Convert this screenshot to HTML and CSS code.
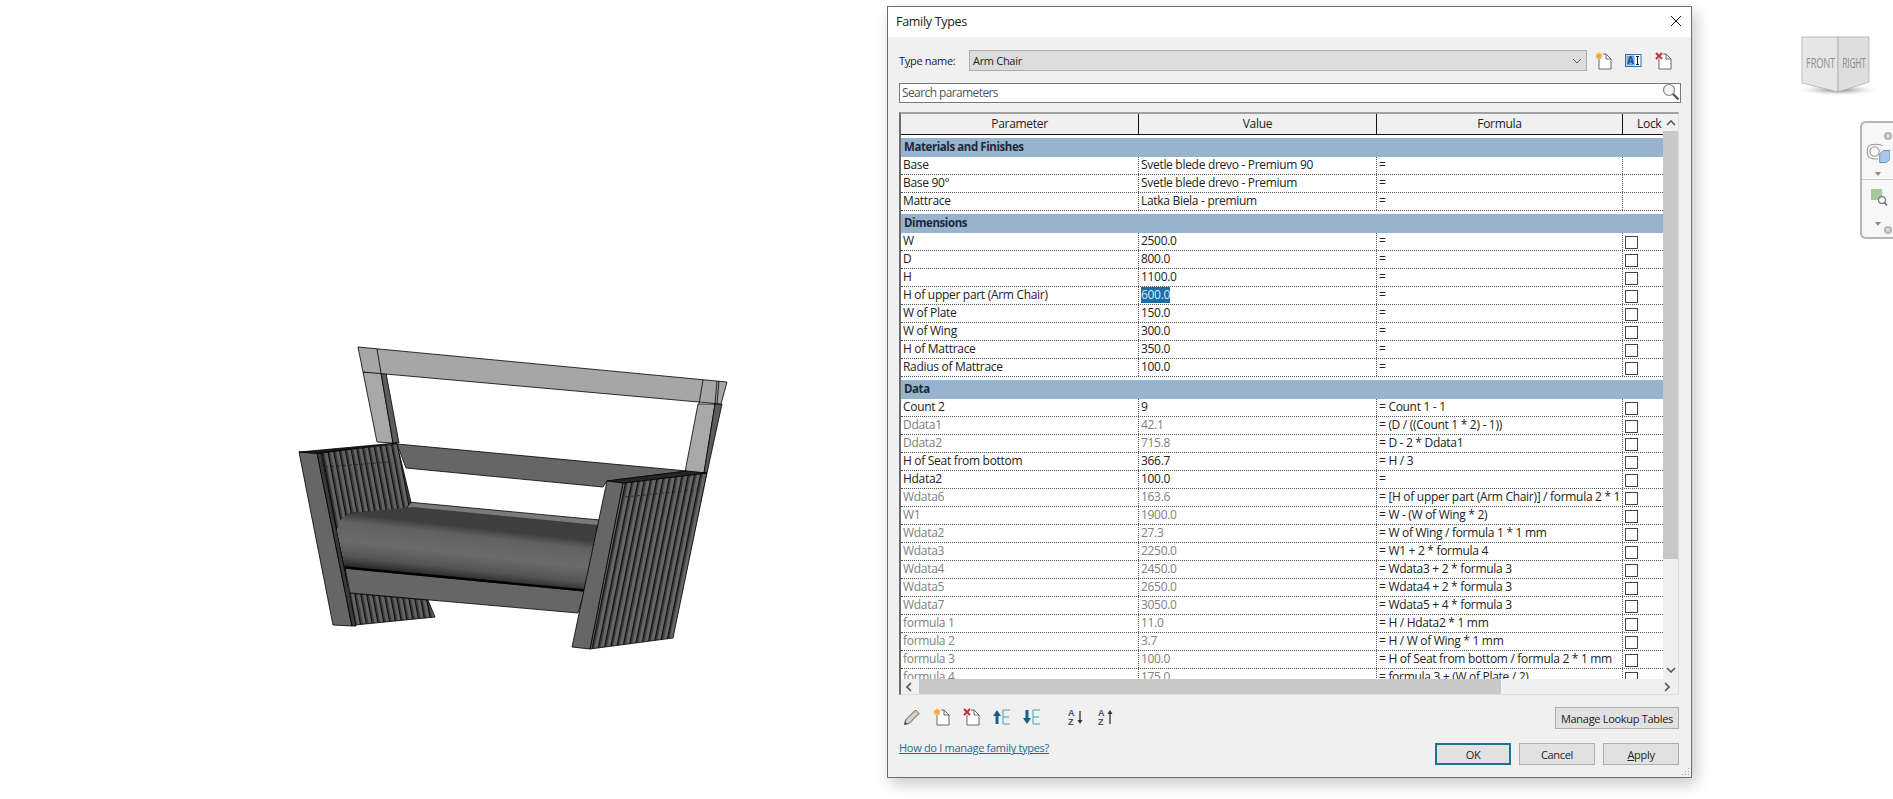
FILE: index.html
```html
<!DOCTYPE html>
<html lang="en">
<head>
<meta charset="utf-8">
<title>Family Types</title>
<link rel="stylesheet" href="styles.css">
</head>
<body>
<svg class="chair" viewBox="0 0 800 799" width="800" height="799" aria-hidden="true">
  <defs>
    <pattern id="slatL" patternUnits="userSpaceOnUse" width="5.8" height="20" patternTransform="rotate(-10.7)">
      <rect width="5.8" height="20" fill="#636363"/><rect width="2.6" height="20" fill="#343434"/><rect width=".9" height="20" fill="#0a0a0a"/>
    </pattern>
    <pattern id="slatR" patternUnits="userSpaceOnUse" width="6" height="20" patternTransform="rotate(11.4)">
      <rect width="6" height="20" fill="#666"/><rect width="2.6" height="20" fill="#343434"/><rect width=".9" height="20" fill="#0a0a0a"/>
    </pattern>
    <linearGradient id="matt" gradientUnits="userSpaceOnUse" x1="473" y1="510" x2="465" y2="582">
      <stop offset="0" stop-color="#3e3e3e"/><stop offset=".24" stop-color="#3f3f3f"/><stop offset=".36" stop-color="#626262"/>
      <stop offset=".62" stop-color="#6a6a6a"/><stop offset=".82" stop-color="#555"/><stop offset="1" stop-color="#1d1d1d"/>
    </linearGradient>
  </defs>
  <g stroke="#000" stroke-width=".8" stroke-linejoin="round">
    <polygon points="363,372 381,373 393,443 377,442" fill="#a8a8a8"/>
    <polygon points="381,373 386,373 399,443 393,443" fill="#5c5c5c"/>
    <polygon points="698,404 715,404 704,473 685,472" fill="#a8a8a8"/>
    <polygon points="715,404 722,404 707,473 704,473" fill="#5c5c5c"/>
    <polygon points="358,347 727,382 721,404 363,372" fill="#a6a6a6"/>
    <path d="M377,349 381,373M703,380 699,404M717,381 715,404M719,381 717,404" fill="none"/>
    <polygon points="397,444 687,471 607,481 603,487 406,468" fill="#666"/>
    <polygon points="408,502 600,520 598,528 405,510" fill="#7b7b7b"/>
    <polygon points="317,453 397,444 411,502 405,510 350,513 336,530 345,567 352,626" fill="url(#slatL)"/>
    <path d="M325,467 390,462" fill="none" stroke="#222" stroke-dasharray="3 3"/>
    <polygon points="350,593 428,600 435,617 355,625" fill="url(#slatL)"/>
    <polygon points="345,568 585,591 578,613 350,593" fill="#666"/>
    <polygon points="337,530 341,519 350,513 413,507 598,525 585,590 345,567" fill="url(#matt)" stroke="none"/>
    <line x1="345" y1="567.5" x2="585" y2="590.5" stroke-width="2.4"/>
    <polygon points="299,452 317,453 352,626 333,625" fill="#666"/>
    <polygon points="317,453 321,453 356,626 352,626" fill="#3a3a3a"/>
    <polygon points="299,452 397,443 317,453.5" fill="#1a1a1a"/>
    <polygon points="623,483 707,473 673,638 590,649" fill="url(#slatR)"/>
    <path d="M625,497 702,489" fill="none" stroke="#222" stroke-dasharray="3 3"/>
    <polygon points="607,481 687,471 707,473 623,483" fill="#262626"/>
    <polygon points="607,481 623,483 590,649 572,647" fill="#666"/>
  </g>
</svg>

<svg class="cube" viewBox="0 0 100 65" width="100" height="65" aria-hidden="true">
  <defs>
    <radialGradient id="cubeShade"><stop offset="0" stop-color="#777"/><stop offset="1" stop-color="#fff" stop-opacity="0"/></radialGradient>
  </defs>
  <ellipse cx="46" cy="55" rx="44" ry="6" fill="url(#cubeShade)"/>
  <polygon points="10,2 46,2 46,57 10,48" fill="#e6e6e6" stroke="#a8a8a8" stroke-width=".7"/>
  <polygon points="46,2 77,2 77,47 46,57" fill="#dedede" stroke="#a8a8a8" stroke-width=".7"/>
  <text x="28.5" y="33" class="cube-label" transform="translate(28.5 0) scale(.62 1) translate(-28.5 0)">FRONT</text>
  <text x="62" y="33" class="cube-label" transform="translate(62 0) scale(.56 1) translate(-62 0)">RIGHT</text>
</svg>

<div class="navbar">
  <span class="nav-dot"></span>
  <svg class="nav-wheel" viewBox="0 0 28 28" width="24" height="24" aria-hidden="true">
    <path d="M19,4.5C17,2 6,1.5 3,5C0,9 1,17 5,18.5C8,20 12,20 14,19.5" fill="none" stroke="#9a9a9a" stroke-width="1.2"/>
    <circle cx="10" cy="11" r="5.5" fill="none" stroke="#9a9a9a" stroke-width="1.2"/>
    <polygon points="16,14 20,10 28,10 28,20 24,24 16,24" fill="#a9c8ea" stroke="#4d82bd"/>
  </svg>
  <span class="nav-caret"></span>
  <span class="nav-rule"></span>
  <svg class="nav-zoom" viewBox="0 0 18 18" width="18" height="18" aria-hidden="true">
    <rect x="1" y="1" width="11" height="11" fill="#a6c998"/>
    <circle cx="12" cy="12" r="3.4" fill="#fff" stroke="#777" stroke-width="1.2"/>
    <line x1="14.5" y1="14.5" x2="17" y2="17.5" stroke="#666" stroke-width="1.5"/>
  </svg>
  <span class="nav-caret nav-caret-low"></span>
  <span class="nav-dot nav-dot-low"></span>
</div>

<div class="dialog">
  <header class="titlebar">
    <span>Family Types</span>
    <svg class="close" viewBox="0 0 12 12" width="12" height="12" aria-hidden="true"><path d="M1,1 11,11M11,1 1,11" stroke="#111" fill="none" stroke-width="1"/></svg>
  </header>

  <div class="content">
    <div class="type-row">
      <label class="type-label">T<u>y</u>pe name:</label>
      <div class="combo"><span>Arm Chair</span>
        <svg viewBox="0 0 10 6" width="10" height="6" aria-hidden="true"><path d="M1,1 5,5 9,1" fill="none" stroke="#555"/></svg>
      </div>
      <div class="type-icons">
        <svg viewBox="0 0 18 18" width="18" height="18" aria-hidden="true"><path d="M4,7V17H16V7L11,2H8M11,2V7H16" fill="#fff" stroke="#444" stroke-width=".8"/><path d="M4,0.5V8M0.5,4.2H7.5M1.5,1.7 6.5,6.7M6.5,1.7 1.5,6.7" stroke="#eda936" stroke-width="1.3"/></svg>
        <svg class="rename" viewBox="0 0 18 14" width="18" height="14" aria-hidden="true"><rect x=".5" y=".5" width="15.500" height="12" fill="#fff" stroke="#2f6da6"/><rect x="1.500" y="1.500" width="8" height="10" fill="#6ea6d8"/><text x="2" y="10" class="rename-a">A</text><path d="M11,2.500H14M11,10.500H14M12.500,2.500V10.500" stroke="#222" fill="none"/></svg>
        <svg viewBox="0 0 18 18" width="18" height="18" aria-hidden="true"><path d="M4,7V17H16V7L11,2H8M11,2V7H16" fill="#fff" stroke="#444" stroke-width=".8"/><path d="M1,1 7,7M7,1 1,7" stroke="#b8333a" stroke-width="2"/></svg>
      </div>
    </div>

    <div class="search">
      <span>Search parameters</span>
      <svg viewBox="0 0 18 18" width="18" height="18" aria-hidden="true"><circle cx="7" cy="7" r="5.500" fill="#eef3f7" stroke="#888" stroke-width="1.200"/><line x1="11" y1="11" x2="16.500" y2="16.500" stroke="#555" stroke-width="2.400"/></svg>
    </div>

    <div class="grid">
      <div class="grid-top">
        <div class="grid-main">
          <div class="head">
            <div>Parameter</div><div>Value</div><div>Formula</div><div class="head-lock">Lock</div>
          </div>

          <div class="group">Materials and Finishes</div>
          <div class="row"><div>Base</div><div>Svetle blede drevo - Premium 90</div><div>=</div><div></div></div>
          <div class="row"><div>Base 90°</div><div>Svetle blede drevo - Premium</div><div>=</div><div></div></div>
          <div class="row"><div>Mattrace</div><div>Latka Biela - premium</div><div>=</div><div></div></div>

          <div class="group">Dimensions</div>
          <div class="row"><div>W</div><div>2500.0</div><div>=</div><div><i class="check"></i></div></div>
          <div class="row"><div>D</div><div>800.0</div><div>=</div><div><i class="check"></i></div></div>
          <div class="row"><div>H</div><div>1100.0</div><div>=</div><div><i class="check"></i></div></div>
          <div class="row"><div>H of upper part (Arm Chair)</div><div><span class="selected">600.0</span></div><div>=</div><div><i class="check"></i></div></div>
          <div class="row"><div>W of Plate</div><div>150.0</div><div>=</div><div><i class="check"></i></div></div>
          <div class="row"><div>W of Wing</div><div>300.0</div><div>=</div><div><i class="check"></i></div></div>
          <div class="row"><div>H of Mattrace</div><div>350.0</div><div>=</div><div><i class="check"></i></div></div>
          <div class="row"><div>Radius of Mattrace</div><div>100.0</div><div>=</div><div><i class="check"></i></div></div>

          <div class="group">Data</div>
          <div class="row"><div>Count 2</div><div>9</div><div>= Count 1 - 1</div><div><i class="check"></i></div></div>
          <div class="row dim"><div>Ddata1</div><div>42.1</div><div>= (D / ((Count 1 * 2) - 1))</div><div><i class="check"></i></div></div>
          <div class="row dim"><div>Ddata2</div><div>715.8</div><div>= D - 2 * Ddata1</div><div><i class="check"></i></div></div>
          <div class="row"><div>H of Seat from bottom</div><div>366.7</div><div>= H / 3</div><div><i class="check"></i></div></div>
          <div class="row"><div>Hdata2</div><div>100.0</div><div>=</div><div><i class="check"></i></div></div>
          <div class="row dim"><div>Wdata6</div><div>163.6</div><div>= [H of upper part (Arm Chair)] / formula 2 * 1 mm</div><div><i class="check"></i></div></div>
          <div class="row dim"><div>W1</div><div>1900.0</div><div>= W - (W of Wing * 2)</div><div><i class="check"></i></div></div>
          <div class="row dim"><div>Wdata2</div><div>27.3</div><div>= W of Wing / formula 1 * 1 mm</div><div><i class="check"></i></div></div>
          <div class="row dim"><div>Wdata3</div><div>2250.0</div><div>= W1 + 2 * formula 4</div><div><i class="check"></i></div></div>
          <div class="row dim"><div>Wdata4</div><div>2450.0</div><div>= Wdata3 + 2 * formula 3</div><div><i class="check"></i></div></div>
          <div class="row dim"><div>Wdata5</div><div>2650.0</div><div>= Wdata4 + 2 * formula 3</div><div><i class="check"></i></div></div>
          <div class="row dim"><div>Wdata7</div><div>3050.0</div><div>= Wdata5 + 4 * formula 3</div><div><i class="check"></i></div></div>
          <div class="row dim"><div>formula 1</div><div>11.0</div><div>= H / Hdata2 * 1 mm</div><div><i class="check"></i></div></div>
          <div class="row dim"><div>formula 2</div><div>3.7</div><div>= H / W of Wing * 1 mm</div><div><i class="check"></i></div></div>
          <div class="row dim"><div>formula 3</div><div>100.0</div><div>= H of Seat from bottom / formula 2 * 1 mm</div><div><i class="check"></i></div></div>
          <div class="row dim"><div>formula 4</div><div>175.0</div><div>= formula 3 + (W of Plate / 2)</div><div><i class="check"></i></div></div>
        </div>
        <div class="vscroll">
          <svg viewBox="0 0 10 6" width="10" height="6" aria-hidden="true"><path d="M1,5 5,1 9,5" class="arrow"/></svg>
          <div class="vthumb"></div>
          <svg class="vdown" viewBox="0 0 10 6" width="10" height="6" aria-hidden="true"><path d="M1,1 5,5 9,1" class="arrow"/></svg>
        </div>
      </div>
      <div class="hscroll">
        <svg viewBox="0 0 6 10" width="6" height="10" aria-hidden="true"><path d="M5,1 1,5 5,9" class="arrow"/></svg>
        <div class="hthumb"></div>
        <svg viewBox="0 0 6 10" width="6" height="10" aria-hidden="true"><path d="M1,1 5,5 1,9" class="arrow"/></svg>
      </div>
    </div>

    <div class="toolbar">
      <div class="tools">
        <svg viewBox="0 0 18 18" width="18" height="18" aria-hidden="true"><path d="M1.500,16.500 2.500,12 12.500,2 16,5.500 6,15.500Z" fill="#d8cfc0" stroke="#555"/><path d="M1.500,16.500 2.500,14 4,15.500Z" fill="#333"/></svg>
        <svg viewBox="0 0 18 18" width="18" height="18" aria-hidden="true"><path d="M4,7V17H16V7L11,2H8M11,2V7H16" fill="#fff" stroke="#444" stroke-width=".8"/><path d="M4,0.5V8M0.5,4.2H7.5M1.500,1.700 6.500,6.700M6.500,1.700 1.500,6.700" stroke="#eda936" stroke-width="1.300"/></svg>
        <svg viewBox="0 0 18 18" width="18" height="18" aria-hidden="true"><path d="M4,7V17H16V7L11,2H8M11,2V7H16" fill="#fff" stroke="#444" stroke-width=".8"/><path d="M1,1 7,7M7,1 1,7" stroke="#b8333a" stroke-width="2"/></svg>
        <svg viewBox="0 0 18 18" width="18" height="18" aria-hidden="true"><path d="M4,2 8,8H5.500V16H2.500V8H0Z" fill="#0f6489"/><path d="M17,2H10V16H17M10,9H16" fill="none" stroke="#46a3b5"/></svg>
        <svg viewBox="0 0 18 18" width="18" height="18" aria-hidden="true"><path d="M4,16 8,10H5.500V2H2.500V10H0Z" fill="#0f6489"/><path d="M17,2H10V16H17M10,9H16" fill="none" stroke="#46a3b5"/></svg>
        <svg class="sort-first" viewBox="0 0 18 18" width="18" height="18" aria-hidden="true"><text x="1" y="8" class="sort-letter">A</text><text x="1" y="17" class="sort-letter">Z</text><path d="M13,3V14" stroke="#333" stroke-width="1.300"/><path d="M10.500,12H15.500L13,16Z" fill="#333"/></svg>
        <svg viewBox="0 0 18 18" width="18" height="18" aria-hidden="true"><text x="1" y="8" class="sort-letter">A</text><text x="1" y="17" class="sort-letter">Z</text><path d="M13,5V16" stroke="#333" stroke-width="1.300"/><path d="M10.500,6H15.500L13,2Z" fill="#333"/></svg>
      </div>
      <button class="btn btn-wide" type="button">Mana<u>g</u>e Lookup Tables</button>
    </div>

    <div class="footer">
      <a class="help" href="#">How do I manage family types?</a>
      <div class="actions">
        <button class="btn btn-default" type="button">OK</button>
        <button class="btn" type="button">Cancel</button>
        <button class="btn" type="button"><u>A</u>pply</button>
      </div>
    </div>
  </div>
  <svg class="grip" viewBox="0 0 9 9" width="9" height="9" aria-hidden="true"><path d="M7,1h1v1h-1zM7,4h1v1h-1zM4,4h1v1h-1zM7,7h1v1h-1zM4,7h1v1h-1zM1,7h1v1h-1z" fill="#aaa"/></svg>
</div>
</body>
</html>
```

FILE: styles.css
```css
* { box-sizing: border-box; }
html, body { margin: 0; height: 100%; }
body {
  position: relative;
  width: 1893px;
  height: 799px;
  overflow: hidden;
  background: #fff;
  font-family: "Open Sans", "Liberation Sans", sans-serif;
  font-size: 12px;
  letter-spacing: -.3px;
  color: #222;
}

/* Free-canvas items */
.chair { position: absolute; left: 0; top: 0; }
.cube { position: absolute; left: 1792px; top: 35px; }
.cube-label { font-family: "Open Sans", sans-serif; font-size: 15px; fill: #8d8d8d; text-anchor: middle; }

.navbar {
  position: absolute;
  left: 1860px;
  top: 121px;
  width: 33px;
  height: 118px;
  border: 2px solid #b4b4b4;
  border-right: 0;
  border-radius: 6px 0 0 6px;
  background: #f7f7f7;
  display: flex;
  flex-direction: column;
  align-items: flex-start;
}
.nav-dot { width: 8px; height: 8px; margin: 9px 0 0 22px; border-radius: 50%; border: 2px solid #b5b5b5; background: #ddd; }
.nav-dot-low { margin-top: auto; margin-bottom: 3px; }
.nav-wheel { margin: 2px 0 0 4px; }
.nav-caret { width: 0; height: 0; margin: 6px 0 0 13px; border: 3px solid transparent; border-top: 4px solid #8a8a8a; border-bottom: 0; }
.nav-rule { width: 100%; height: 1px; margin-top: 3px; background: #ccc; }
.nav-zoom { margin: 8px 0 0 8px; }
.nav-caret-low { margin-top: 16px; }

/* Dialog window */
.dialog {
  position: absolute;
  left: 887px;
  top: 6px;
  width: 805px;
  height: 772px;
  border: 1px solid #6d6d6d;
  background: #f0f0f0;
  box-shadow: 4px 6px 14px rgba(0, 0, 0, .22);
}
.titlebar {
  height: 30px;
  background: #fff;
  display: flex;
  align-items: center;
  justify-content: space-between;
  padding: 0 9px 2px 8px;
  font-size: 12.5px;
}
.content { padding: 13px 10px 0 11px; }

.type-row { display: flex; align-items: center; height: 21px; font-size: 11px; }
.type-label { width: 70px; }
.combo {
  width: 618px;
  height: 21px;
  border: 1px solid #adadad;
  background: #dcdcdc;
  display: flex;
  align-items: center;
  justify-content: space-between;
  padding: 0 4px 0 3px;
}
.type-icons { display: flex; align-items: center; margin-left: 8px; gap: 12px; }
.rename-a { font-family: "Liberation Sans", sans-serif; font-size: 10px; font-weight: 700; fill: #1c4f85; }

.search {
  margin-top: 12px;
  height: 20px;
  border: 1px solid #7a7a7a;
  background: #fff;
  display: flex;
  align-items: center;
  justify-content: space-between;
  padding: 0 0 2px 2px;
  color: #555;
  letter-spacing: -.6px;
}

.grid {
  margin: 9px 2px 0 0;
  height: 583px;
  border-top: 2px solid #a0a0a0;
  border-left: 2px solid #6b6b6b;
  border-right: 1px solid #ddd;
  border-bottom: 1px solid #ddd;
  display: flex;
  flex-direction: column;
}
.grid-top { display: flex; height: 565px; }
.grid-main { width: 762px; height: 565px; overflow: hidden; background: #fff; }

.head, .row { display: grid; }
.head { grid-template-columns: 238px 238px 246px 40px; height: 21px; background: #f0f0f0; border-bottom: 1px solid #111; }
.row { grid-template-columns: 237px 238px 246px 41px; height: 18px; border-bottom: 1px dotted #555; }
.head > div { border-right: 1px solid #111; text-align: center; line-height: 19px; white-space: nowrap; overflow: hidden; }
.head > .head-lock { border-right: 0; text-align: left; padding-left: 14px; }

.group {
  height: 19px;
  margin-top: 3px;
  padding-left: 3px;
  background: #97b3ce;
  font-size: 11.5px;
  font-weight: 700;
  letter-spacing: -.42px;
  line-height: 18px;
  color: #1d2a38;
}

.row > div { padding-left: 2px; line-height: 16px; white-space: nowrap; overflow: hidden; }
.row > div + div { border-left: 1px dotted #555; }
.dim { color: #808080; }
.dim > div:nth-child(3) { color: #222; }
.selected { display: inline-block; background: #1b6ea5; color: #dfe9f0; line-height: 16px; }
.check { display: block; width: 13px; height: 13px; margin-top: 3px; background: #fff; border: 1px solid #444; }

.vscroll { flex: 1; display: flex; flex-direction: column; align-items: center; background: #f0f0f0; padding-top: 6px; }
.vthumb { width: 15px; height: 428px; margin-top: 5px; background: #c8c8c8; }
.vdown { margin-top: 108px; }
.arrow { fill: none; stroke: #555; stroke-width: 1.6; }

.hscroll { flex: 1; display: flex; align-items: center; background: #f0f0f0; }
.hscroll > svg:first-child { margin-left: 5px; }
.hthumb { width: 582px; height: 15px; margin: 0 163px 0 7px; background: #c8c8c8; }

.toolbar { display: flex; align-items: center; justify-content: space-between; margin: 12px 2px 0 0; height: 22px; }
.tools { display: flex; align-items: center; gap: 12px; padding-left: 4px; margin-bottom: 2px; }
.sort-first { margin-left: 14px; }
.sort-letter { font-family: "Liberation Sans", sans-serif; font-size: 9px; font-weight: 700; fill: #3d5170; }

.btn {
  width: 76px;
  height: 22px;
  padding: 0;
  border: 1px solid #adadad;
  background: #e1e1e1;
  font: inherit;
  font-size: 11px;
  letter-spacing: inherit;
  color: #222;
  white-space: nowrap;
}
.btn-wide { width: 124px; }
.btn-default { border: 2px solid #1f7199; }

.footer { display: flex; justify-content: space-between; align-items: flex-start; margin: 10px 2px 0 0; }
.help { padding-top: 1px; font-size: 11px; letter-spacing: -.3px; color: #1c6a96; text-decoration: underline; }
.actions { display: flex; gap: 8px; margin-top: 4px; }

.grip { position: absolute; right: 1px; bottom: 1px; }
```
